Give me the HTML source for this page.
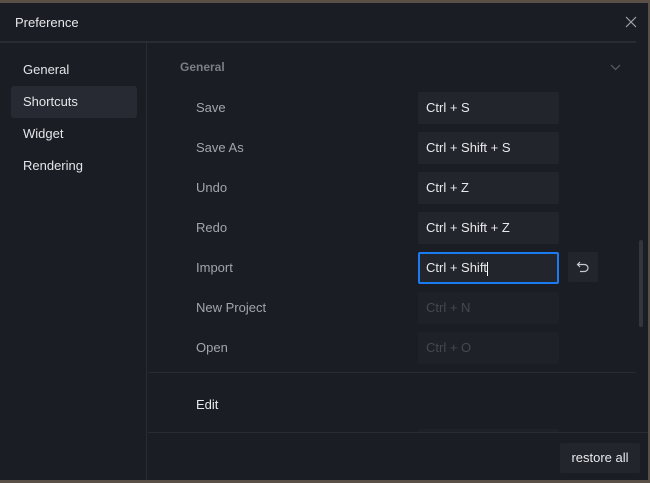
<!DOCTYPE html>
<html><head><style>
body{margin:0;width:650px;height:483px;background:#5a5048;font-family:"Liberation Sans",sans-serif;overflow:hidden;position:relative}
.dlg{position:absolute;left:0;top:3px;width:648px;height:477px;background:#1b1d24}
.t{position:absolute;white-space:nowrap}
.hdr{position:absolute;left:0;top:38px;width:636px;height:2px;background:#2a2c33}
.side{position:absolute;left:146px;top:40px;width:1px;height:437px;background:#2a2c33}
.nav{position:absolute;left:23px;font-size:13px;color:#e4e5e8}
.lbl{position:absolute;left:196px;font-size:13px;color:#a3a5ab}
.inp{position:absolute;left:418px;width:141px;height:32px;background:#23252d;border-radius:2px;box-sizing:border-box;padding-left:8px;line-height:32px;font-size:13px;color:#e8e9ec}
.dim{color:#46484f;background:#1f2128}
</style></head><body>
<div class="dlg">
<div class="t" style="left:15px;top:12px;font-size:13px;color:#e8e9ec">Preference</div>
<svg style="position:absolute;left:625px;top:13px" width="12" height="12"><path d="M1 1L11 11M11 1L1 11" stroke="#a0a2a8" stroke-width="1.2"/></svg>
<div class="hdr"></div>
<div class="side"></div>
<div style="position:absolute;left:11px;top:83px;width:126px;height:32px;background:#272a32;border-radius:3px"></div>
<div class="nav t" style="top:59px">General</div>
<div class="nav t" style="top:91px">Shortcuts</div>
<div class="nav t" style="top:123px">Widget</div>
<div class="nav t" style="top:155px">Rendering</div>
<div class="t" style="left:180px;top:57px;font-size:12px;font-weight:bold;color:#7b7e86">General</div>
<svg style="position:absolute;left:610px;top:61px" width="11" height="7"><path d="M1 1L5.5 5.5L10 1" stroke="#5c5f66" fill="none" stroke-width="1.2"/></svg>
<div class="lbl t" style="top:97px">Save</div>
<div class="lbl t" style="top:137px">Save As</div>
<div class="lbl t" style="top:177px">Undo</div>
<div class="lbl t" style="top:217px">Redo</div>
<div class="lbl t" style="top:257px">Import</div>
<div class="lbl t" style="top:297px">New Project</div>
<div class="lbl t" style="top:337px">Open</div>
<div class="inp" style="top:89px">Ctrl + S</div>
<div class="inp" style="top:129px">Ctrl + Shift + S</div>
<div class="inp" style="top:169px">Ctrl + Z</div>
<div class="inp" style="top:209px">Ctrl + Shift + Z</div>
<div class="inp" style="top:249px;border:2px solid #1a7cf0;padding-left:6px;line-height:28px">Ctrl + Shift<span style="display:inline-block;width:1px;height:14px;background:#fff;vertical-align:middle"></span></div>
<div style="position:absolute;left:568px;top:249px;width:30px;height:30px;background:#23252d;border-radius:2px"></div>
<svg style="position:absolute;left:576px;top:257px" width="14" height="14"><path d="M4 2L1.5 4.5L4 7M1.5 4.5H8.5a3.5 3.5 0 0 1 0 7H4" stroke="#c8c9cd" fill="none" stroke-width="1.2"/></svg>
<div class="inp dim" style="top:289px">Ctrl + N</div>
<div class="inp dim" style="top:329px">Ctrl + O</div>
<div style="position:absolute;left:148px;top:369px;width:488px;height:1px;background:#2a2c33"></div>
<div class="t" style="left:196px;top:394px;font-size:13px;color:#e8e9ec">Edit</div>
<div class="inp dim" style="top:426px;height:4px"></div>
<div style="position:absolute;left:148px;top:429px;width:500px;height:1px;background:#2a2c33"></div>
<div style="position:absolute;left:639px;top:237px;width:4px;height:87px;background:#34363d;border-radius:2px"></div>
<div style="position:absolute;left:560px;top:440px;width:80px;height:30px;background:#23252d;border-radius:2px;font-size:13px;color:#e8e9ec;text-align:center;line-height:30px">restore all</div>
</div>
</body></html>
